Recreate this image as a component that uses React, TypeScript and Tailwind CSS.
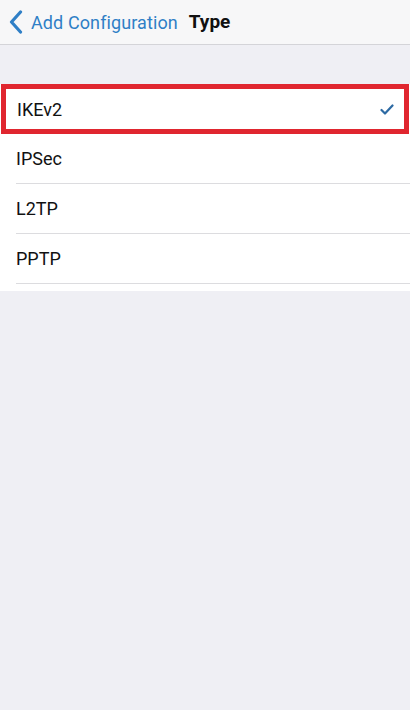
import React from 'react';

const TYPES = ['IKEv2', 'IPSec', 'L2TP', 'PPTP'];

const ChevronBack = () => (
  <svg width="14" height="24" viewBox="0 0 14 24" fill="none">
    <path d="M11.5 2 L2.5 12 L11.5 22" stroke="#2f7fc6" strokeWidth="3.2" strokeLinecap="round" strokeLinejoin="round" />
  </svg>
);

const Check = () => (
  <svg width="14" height="11" viewBox="0 0 14 11" fill="none">
    <path d="M1.5 6 L5 9.5 L12.5 1.5" stroke="#2d6aa3" strokeWidth="2.2" strokeLinecap="round" strokeLinejoin="round" />
  </svg>
);

export default function App() {
  const selected = 'IKEv2';

  return (
    <div className="w-[410px] h-[710px] bg-[#efeff4] font-['Roboto',sans-serif] overflow-hidden">
      {/* Nav bar */}
      <div className="h-[45px] bg-[#f7f7f8] border-b border-[#d4d4d8] flex items-center pl-[9px]">
        <ChevronBack />
        <span className="ml-[8px] text-[18px] text-[#2f7fc6] tracking-[0.1px]">Add Configuration</span>
        <span className="ml-[11px] text-[19px] font-bold text-[#111]">Type</span>
      </div>

      {/* List */}
      <div className="mt-[39px] bg-white pb-[7px]">
        {TYPES.map((t) => {
          const isSel = t === selected;
          if (isSel) {
            return (
              <div key={t} className="mx-[1px] h-[50px] border-[5px] border-[#e0262f] flex items-center pl-[11px] pr-[10px] justify-between">
                <span className="text-[18px] text-[#111]">{t}</span>
                <Check />
              </div>
            );
          }
          return (
            <div key={t} className="h-[50px] pl-[16px] flex">
              <div className="flex-1 flex items-center border-b border-[#dcdcdf]">
                <span className="text-[18px] text-[#111]">{t}</span>
              </div>
            </div>
          );
        })}
      </div>
    </div>
  );
}
